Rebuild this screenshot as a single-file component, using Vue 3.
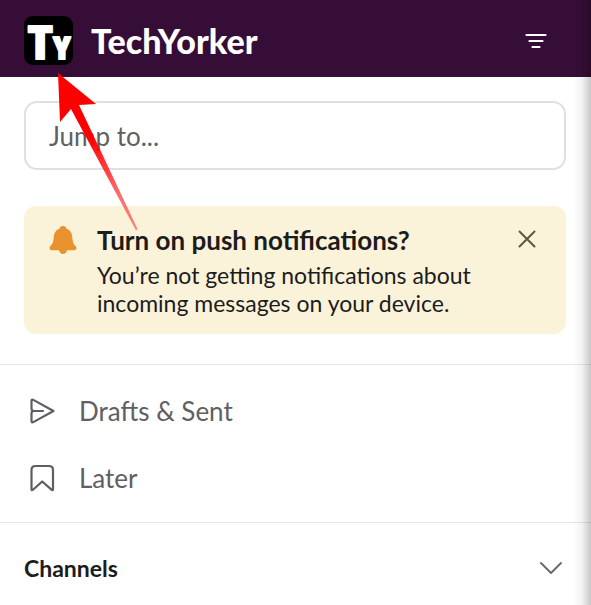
<script setup>
import { ref } from 'vue'

const query = ref('')
const bannerOpen = ref(true)
const channelsOpen = ref(false)
</script>

<template>
  <div class="app">
    <header class="header">
      <svg class="logo" viewBox="0 0 49 49" role="img" aria-label="TechYorker logo">
        <rect width="49" height="49" rx="9" fill="#000" />
        <text class="mark" x="25" y="43" text-anchor="middle"><tspan class="mark-t">T</tspan><tspan class="mark-y">Y</tspan></text>
      </svg>
      <h1 class="title">TechYorker</h1>
      <button class="icon-button" type="button" aria-label="Filter">
        <svg width="24" height="18" viewBox="0 0 24 18" fill="none" stroke="#fff" stroke-width="2.200" stroke-linecap="round">
          <path d="M2.500 3H21.500M5.500 9H18.500M8.500 15H15.500" />
        </svg>
      </button>
    </header>

    <main>
      <section class="top">
        <input v-model="query" class="search" type="text" placeholder="Jump to..." aria-label="Jump to" />

        <aside v-if="bannerOpen" class="banner">
          <svg class="bell" width="28" height="28" viewBox="0 0 28 28" fill="#e8912d">
            <path d="M14 0c2 0 3.200 1.200 3.500 2.700 3.900 1.400 5.500 4.500 5.800 8.600.3 4.700 1 6.700 3.500 9 1.100 1 .7 4-1.400 4H18c-.5 2.200-1.900 3.700-4 3.700s-3.500-1.500-4-3.700H2.600c-2.100 0-2.500-3-1.400-4 2.500-2.300 3.200-4.300 3.500-9 .3-4.100 1.900-7.200 5.800-8.600C10.800 1.200 12 0 14 0z" />
          </svg>
          <div class="banner-text">
            <h2>Turn on push notifications?</h2>
            <p>You’re not getting notifications about incoming messages on your device.</p>
          </div>
          <button class="icon-button close" type="button" aria-label="Dismiss" @click="bannerOpen = false">
            <svg width="18" height="18" viewBox="0 0 18 18" fill="none" stroke="#5a5648" stroke-width="2" stroke-linecap="round">
              <path d="M1.500 1.500L16.500 16.500M16.500 1.500L1.500 16.500" />
            </svg>
          </button>
        </aside>
      </section>

      <nav class="links">
        <a class="link" href="#drafts">
          <svg width="26" height="28" viewBox="0 0 26 28" fill="none" stroke="#5e5d60" stroke-width="2.200" stroke-linecap="round" stroke-linejoin="round">
            <path d="M2.500 4Q2.500 2 4.300 2.900L24.500 14 4.300 25.100Q2.500 26 2.500 24V16.500Q2.500 14 5 14H14M2.500 4V11.500Q2.500 14 5 14" />
          </svg>
          Drafts &amp; Sent
        </a>
        <a class="link" href="#later">
          <svg width="26" height="28" viewBox="0 0 26 28" fill="none" stroke="#5e5d60" stroke-width="2.200" stroke-linecap="round" stroke-linejoin="round">
            <path d="M2.500 6Q2.500 2 6.500 2H20Q24 2 24 6V25Q24 27 22.500 25.700L13.200 17.500 4 25.700Q2.500 27 2.500 25Z" />
          </svg>
          Later
        </a>
      </nav>

      <button class="channels" type="button" :aria-expanded="channelsOpen" @click="channelsOpen = !channelsOpen">
        <span>Channels</span>
        <svg width="24" height="14" viewBox="0 0 24 14" fill="none" stroke="#6c6c6e" stroke-width="2" stroke-linecap="round" stroke-linejoin="round">
          <path d="M2 2L12 12L22 2" />
        </svg>
      </button>
    </main>

    <div class="edge" aria-hidden="true"></div>

    <svg class="arrow" viewBox="0 0 80 158" aria-hidden="true">
      <defs>
        <linearGradient id="arrow-fill" gradientUnits="userSpaceOnUse" x1="0" y1="0" x2="79" y2="157">
          <stop offset="0.4" stop-color="#ff0000" />
          <stop offset="0.75" stop-color="#ff0000" stop-opacity="0.6" />
          <stop offset="1" stop-color="#f42020" stop-opacity="0.5" />
        </linearGradient>
      </defs>
      <polygon points="0,0 38,31 21,32 79.500,156 78,157.500 13,36 2,49" fill="url(#arrow-fill)" />
    </svg>
  </div>
</template>

<style>
body {
  margin: 0;
  background: #fff;
}
</style>

<style scoped>
.app {
  position: relative;
  min-height: 100vh;
  overflow: hidden;
  background: #fff;
  color: #1d1c1d;
  font-family: Lato, "Liberation Sans", sans-serif;
}

.header {
  display: flex;
  align-items: center;
  gap: 18px;
  padding: 16px 43px 12px 24px;
  background: #350d36;
}

.logo {
  width: 49px;
  height: 49px;
  flex: none;
}

.mark {
  fill: #fff;
  stroke: #fff;
  stroke-width: 2;
  stroke-linejoin: round;
  font-family: "Roboto Condensed", Lato, sans-serif;
  font-weight: 900;
}

.mark-t {
  font-size: 46px;
}

.mark-y {
  font-size: 32px;
}

.title {
  flex: 1;
  margin: 0;
  color: #fff;
  font-size: 34px;
  font-weight: 900;
  line-height: 48px;
}

.icon-button {
  display: flex;
  padding: 0;
  border: 0;
  background: none;
  cursor: pointer;
}

.top {
  display: flex;
  flex-direction: column;
  gap: 36px;
  padding: 24px 25px 30px 24px;
}

.search {
  box-sizing: border-box;
  width: 100%;
  height: 69px;
  padding: 0 23px;
  border: 2px solid #e0e0e0;
  border-radius: 13px;
  background: #fff;
  color: #1d1c1d;
  font-family: inherit;
  font-size: 26px;
}

.search::placeholder {
  color: #616061;
  opacity: 1;
}

.banner {
  display: flex;
  align-items: flex-start;
  gap: 20px;
  padding: 20px 30px 17px 25px;
  border-radius: 12px;
  background: #fbf3d9;
}

.bell {
  flex: none;
}

.banner-text {
  flex: 1;
}

.banner-text h2 {
  margin: 0 0 7px;
  font-size: 26px;
  font-weight: 700;
  line-height: 28px;
}

.banner-text p {
  margin: 0;
  font-size: 23px;
  line-height: 28px;
}

.close {
  padding-top: 4px;
}

.links {
  padding: 12px 24px 11px;
  border-top: 1px solid #e6e6e6;
  border-bottom: 1px solid #e6e6e6;
}

.link {
  display: flex;
  align-items: center;
  gap: 24px;
  height: 67px;
  padding-left: 5px;
  color: #616061;
  font-size: 26px;
  text-decoration: none;
}

.channels {
  display: flex;
  align-items: center;
  justify-content: space-between;
  width: 100%;
  padding: 30px 28px 20px 24px;
  border: 0;
  background: none;
  color: #1d1c1d;
  font-family: inherit;
  font-size: 23px;
  font-weight: 700;
  line-height: 30px;
  cursor: pointer;
}

.edge {
  position: absolute;
  top: 0;
  right: 0;
  bottom: 0;
  width: 18px;
  background: linear-gradient(to right, rgba(0, 0, 0, 0), rgba(0, 0, 0, 0.05) 50%, rgba(0, 0, 0, 0.22));
  pointer-events: none;
}

.arrow {
  position: absolute;
  top: 73px;
  left: 58px;
  width: 80px;
  height: 158px;
  pointer-events: none;
}
</style>
